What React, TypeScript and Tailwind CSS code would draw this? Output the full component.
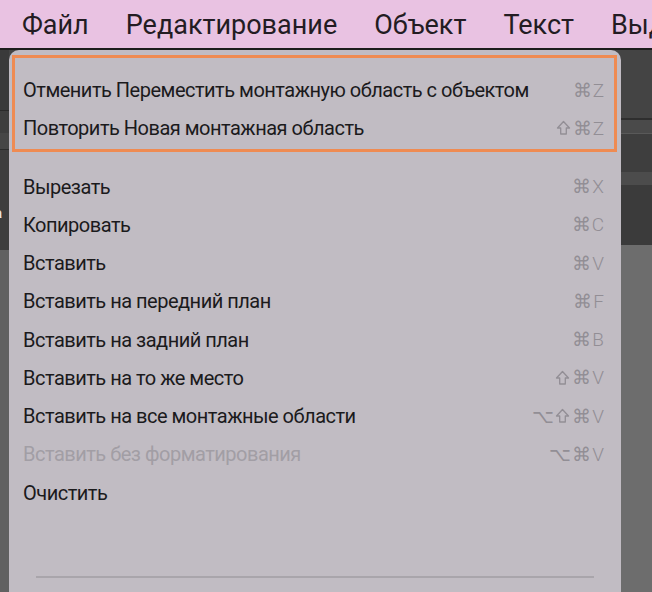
import React from 'react';

interface MenuItem {
  label: string;
  keys?: string;
  disabled?: boolean;
}

const highlighted: MenuItem[] = [
  { label: 'Отменить Переместить монтажную область с объектом', keys: '⌘Z' },
  { label: 'Повторить Новая монтажная область', keys: '⇧⌘Z' },
];

const items: MenuItem[] = [
  { label: 'Вырезать', keys: '⌘X' },
  { label: 'Копировать', keys: '⌘C' },
  { label: 'Вставить', keys: '⌘V' },
  { label: 'Вставить на передний план', keys: '⌘F' },
  { label: 'Вставить на задний план', keys: '⌘B' },
  { label: 'Вставить на то же место', keys: '⇧⌘V' },
  { label: 'Вставить на все монтажные области', keys: '⌥⇧⌘V' },
  { label: 'Вставить без форматирования', keys: '⌥⌘V', disabled: true },
  { label: 'Очистить' },
];

const font = { fontFamily: 'Roboto, "DejaVu Sans", sans-serif' };

// hollow shift arrow, the font's one is too thin
function ShiftIcon() {
  return (
    <svg width="15" height="16" viewBox="0 0 15 16" className="mr-[2px]">
      <path d="M7.5 1.5 L13.5 8 H10.3 V14 H4.7 V8 H1.5 Z" fill="none" stroke="#928e95" strokeWidth="1.3" strokeLinejoin="round" />
    </svg>
  );
}

function Keys({ keys }: { keys: string }) {
  return (
    <span className="flex items-center text-[19px] font-light leading-none tracking-[1px] text-[#928e95]">
      {Array.from(keys).map((k, i) => (k === '⇧' ? <ShiftIcon key={i} /> : <span key={i}>{k}</span>))}
    </span>
  );
}

function Row({ item }: { item: MenuItem }) {
  return (
    <div className="flex h-[38.25px] items-center justify-between">
      <span
        className={`text-[20px] leading-none tracking-[-0.5px] ${item.disabled ? 'text-[#a29ea5]' : 'text-[#1b1a1c]'}`}
      >
        {item.label}
      </span>
      {item.keys && <Keys keys={item.keys} />}
    </div>
  );
}

export default function App() {
  const menus = ['Файл', 'Редактирование', 'Объект', 'Текст', 'Выделение'];

  return (
    <div className="relative h-[592px] w-[652px] overflow-hidden bg-[#6c6c6c]" style={font}>
      {/* Menu bar */}
      <div className="flex h-[48px] items-center gap-[37px] whitespace-nowrap bg-[#e9c2e2] pl-[22px] pt-[3px] text-[27px] text-[#231c23]">
        {menus.map((m) => (
          <span key={m}>{m}</span>
        ))}
      </div>
      <div className="h-[2px] bg-[#1d1d1d]" />

      {/* App window behind the menu */}
      <div className="flex">
        <div className="w-[9px] shrink-0">
          <div className="h-[60px] bg-[#3a3a3a]" />
          <div className="h-px bg-[#2a2a2a]" />
          <div className="h-[22px] bg-[#3e3e3e]" />
          <div className="h-[16px] bg-[#464646]" />
          <div className="h-px bg-[#2c2c2c]" />
          <div className="flex h-[100px] items-start overflow-hidden bg-[#3e3e3e] pt-[56px]">
            <span className="-ml-[6px] text-[15px] font-bold leading-none text-[#e6e6e6]">a</span>
          </div>
          <div className="h-[400px] bg-[#616161]" />
        </div>
        <div className="flex-1">
          <div className="h-[68px] bg-[#444444]" />
          <div className="h-[2px] bg-[#2e2e2e]" />
          <div className="h-[13px] bg-[#4a4a4a]" />
          <div className="h-px bg-[#595959]" />
          <div className="h-[38px] bg-[#3e3e3e]" />
          <div className="h-[13px] bg-[#4c4c4c]" />
          <div className="h-[60px] bg-[#3b3b3b]" />
          <div className="h-[400px] bg-[#6d6d6d]" />
        </div>
      </div>

      {/* Edit dropdown */}
      <div className="absolute left-[9px] top-[50px] h-[560px] w-[612px] rounded-[10px] bg-[#c1bcc3]">
        <div className="ml-[3px] mr-[4px] mt-[5px] border-[3px] border-[#ef8b52] pb-px pl-[8px] pr-[9px] pt-[13px]">
          {highlighted.map((it) => (
            <Row key={it.label} item={it} />
          ))}
        </div>
        <div className="mt-[16px] pl-[14px] pr-[16px]">
          {items.map((it) => (
            <Row key={it.label} item={it} />
          ))}
        </div>
        <div className="mx-[27px] mt-[64px] h-[2px] bg-[#a9a5ab]" />
      </div>
    </div>
  );
}
